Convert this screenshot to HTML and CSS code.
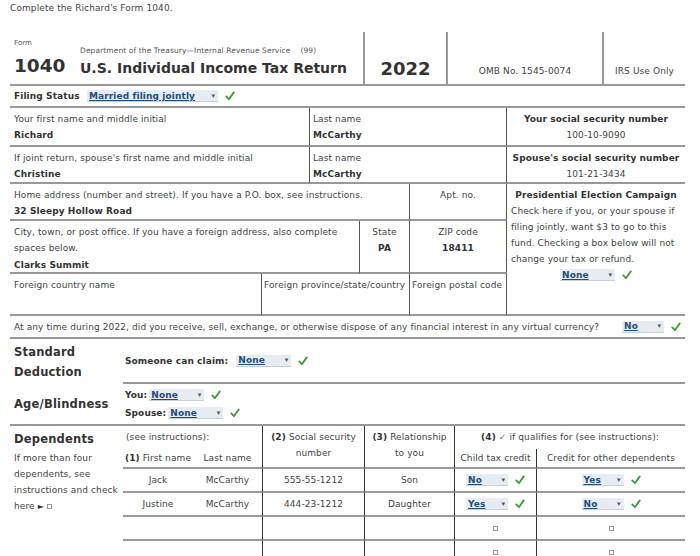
FILE: index.html
```html
<!DOCTYPE html>
<html>
<head>
<meta charset="utf-8">
<title>Form 1040</title>
<link rel="stylesheet" href="styles.css">
</head>
<body>
<div class="page">
  <p class="intro">Complete the Richard's Form 1040.</p>
  <div class="form">
    <header class="hdr">
      <div class="hdr-main">
        <div class="formno"><span class="form-word">Form</span><span class="num">1040</span></div>
        <div class="titleblock"><span class="dept">Department of the Treasury—Internal Revenue Service &nbsp;&nbsp;&nbsp;(99)</span><span class="title">U.S. Individual Income Tax Return</span></div>
      </div>
      <div class="hdr-year">2022</div>
      <div class="hdr-omb">OMB No. 1545-0074</div>
      <div class="hdr-irs">IRS Use Only</div>
    </header>

    <div class="filing">
      <span class="filing-label">Filing Status</span>
      <span class="sel sel-lg"><span class="sel-val">Married filing jointly</span><span class="sel-arrow">▾</span></span>
      <svg class="ok" viewBox="0 0 10 10"><path d="M1.3 5.4 L3.9 8.2 L8.8 1.4"/></svg>
    </div>

    <div class="ident">
      <div class="cell c-first"><div>Your first name and middle initial</div><div class="val">Richard</div></div>
      <div class="cell c-last"><div>Last name</div><div class="val">McCarthy</div></div>
      <div class="cell c-ssn last"><div class="val">Your social security number</div><div>100-10-9090</div></div>

      <div class="cell c-first"><div>If joint return, spouse's first name and middle initial</div><div class="val">Christine</div></div>
      <div class="cell c-last"><div>Last name</div><div class="val">McCarthy</div></div>
      <div class="cell c-ssn last"><div class="val">Spouse's social security number</div><div>101-21-3434</div></div>

      <div class="cell c-addr"><div class="nowrap">Home address (number and street). If you have a P.O. box, see instructions.</div><div class="val">32 Sleepy Hollow Road</div></div>
      <div class="cell c-apt center"><div>Apt. no.</div></div>
      <div class="cell c-pec last">
        <div class="val center">Presidential Election Campaign</div>
        <div class="pec-text">Check here if you, or your spouse if<br>filing jointly, want $3 to go to this<br>fund. Checking a box below will not<br>change your tax or refund.</div>
        <div class="sel-row">
          <span class="sel sel-md"><span class="sel-val">None</span><span class="sel-arrow">▾</span></span>
          <svg class="ok" viewBox="0 0 10 10"><path d="M1.3 5.4 L3.9 8.2 L8.8 1.4"/></svg>
        </div>
      </div>

      <div class="cell c-city"><div class="nowrap">City, town, or post office. If you have a foreign address, also complete<br>spaces below.</div><div class="val">Clarks Summit</div></div>
      <div class="cell c-state center"><div>State</div><div class="val">PA</div></div>
      <div class="cell c-zip center"><div>ZIP code</div><div class="val">18411</div></div>

      <div class="cell c-fcountry"><div>Foreign country name</div></div>
      <div class="cell c-fprov"><div class="nowrap">Foreign province/state/country</div></div>
      <div class="cell c-fpostal"><div class="nowrap">Foreign postal code</div></div>
    </div>

    <div class="currency">
      <span class="nowrap">At any time during 2022, did you receive, sell, exchange, or otherwise dispose of any financial interest in any virtual currency?</span>
      <span class="sel-row push">
        <span class="sel sel-sm"><span class="sel-val">No</span><span class="sel-arrow">▾</span></span>
        <svg class="ok" viewBox="0 0 10 10"><path d="M1.3 5.4 L3.9 8.2 L8.8 1.4"/></svg>
      </span>
    </div>

    <div class="deduction">
      <div class="ded-left std-left">Standard<br>Deduction</div>
      <div class="std-right">
        <span class="b">Someone can claim:</span>
        <span class="sel sel-md gap-l"><span class="sel-val">None</span><span class="sel-arrow">▾</span></span>
        <svg class="ok" viewBox="0 0 10 10"><path d="M1.3 5.4 L3.9 8.2 L8.8 1.4"/></svg>
      </div>
      <div class="ded-left age-left">Age/Blindness</div>
      <div class="age-right">
        <div class="age-line"><span class="b">You:</span><span class="sel sel-md"><span class="sel-val">None</span><span class="sel-arrow">▾</span></span><svg class="ok" viewBox="0 0 10 10"><path d="M1.3 5.4 L3.9 8.2 L8.8 1.4"/></svg></div>
        <div class="age-line"><span class="b">Spouse:</span><span class="sel sel-md"><span class="sel-val">None</span><span class="sel-arrow">▾</span></span><svg class="ok" viewBox="0 0 10 10"><path d="M1.3 5.4 L3.9 8.2 L8.8 1.4"/></svg></div>
      </div>
    </div>

    <div class="deps">
      <div class="deps-left">
        <div class="deps-title">Dependents</div>
        <div class="deps-note">If more than four<br>dependents, see<br>instructions and check<br>here <span class="tri">►</span> <span class="box"></span></div>
      </div>

      <div class="dh dh-see">(see instructions):</div>
      <div class="dh dh-ssn"><span class="b">(2)</span> Social security<br>number</div>
      <div class="dh dh-rel"><span class="b">(3)</span> Relationship<br>to you</div>
      <div class="dh dh-q"><span class="b">(4)</span> <span class="thin">✓</span> if qualifies for (see instructions):</div>
      <div class="dh2 dh-fn"><span><span class="b">(1)</span> First name</span></div>
      <div class="dh2 dh-ln vr">Last name</div>
      <div class="dh2 dh-ctc vr">Child tax credit</div>
      <div class="dh2 dh-cod">Credit for other dependents</div>

      <div class="dc">Jack</div>
      <div class="dc vr">McCarthy</div>
      <div class="dc vr">555-55-1212</div>
      <div class="dc vr">Son</div>
      <div class="dc vr"><span class="sel sel-sm"><span class="sel-val">No</span><span class="sel-arrow">▾</span></span><svg class="ok" viewBox="0 0 10 10"><path d="M1.3 5.4 L3.9 8.2 L8.8 1.4"/></svg></div>
      <div class="dc"><span class="sel sel-sm"><span class="sel-val">Yes</span><span class="sel-arrow">▾</span></span><svg class="ok" viewBox="0 0 10 10"><path d="M1.3 5.4 L3.9 8.2 L8.8 1.4"/></svg></div>

      <div class="dc">Justine</div>
      <div class="dc vr">McCarthy</div>
      <div class="dc vr">444-23-1212</div>
      <div class="dc vr">Daughter</div>
      <div class="dc vr"><span class="sel sel-sm"><span class="sel-val">Yes</span><span class="sel-arrow">▾</span></span><svg class="ok" viewBox="0 0 10 10"><path d="M1.3 5.4 L3.9 8.2 L8.8 1.4"/></svg></div>
      <div class="dc"><span class="sel sel-sm"><span class="sel-val">No</span><span class="sel-arrow">▾</span></span><svg class="ok" viewBox="0 0 10 10"><path d="M1.3 5.4 L3.9 8.2 L8.8 1.4"/></svg></div>

      <div class="dc"></div>
      <div class="dc vr"></div>
      <div class="dc vr"></div>
      <div class="dc vr"></div>
      <div class="dc vr"><span class="box"></span></div>
      <div class="dc"><span class="box"></span></div>

      <div class="dc"></div>
      <div class="dc vr"></div>
      <div class="dc vr"></div>
      <div class="dc vr"></div>
      <div class="dc vr"><span class="box"></span></div>
      <div class="dc"><span class="box"></span></div>
    </div>
  </div>
</div>
</body>
</html>
```

FILE: styles.css
```css
* { box-sizing: border-box; }

html, body { height: 100%; }

body {
  margin: 0;
  font-family: "DejaVu Sans", Verdana, sans-serif;
  font-size: 9px;
  letter-spacing: 0.1px;
  color: #444;
  background: #fff;
  overflow: hidden;
}

.page {
  width: 700px;
  padding: 2px 15px 0 10px;
}

.intro {
  margin: 0;
  height: 30px;
  line-height: 12px;
  color: #444;
}

.form { width: 675px; }

.nowrap { white-space: nowrap; }
.b { font-weight: bold; color: #333; }
.val { font-weight: bold; color: #333; }
.center { text-align: center; }

/* ---------- header ---------- */
.hdr {
  display: flex;
  height: 54px;
  border-bottom: 2px solid #999;
}

.hdr-main {
  width: 355px;
  display: flex;
  padding-left: 4px;
  border-right: 2px solid #999;
}

.formno {
  width: 66px;
  display: flex;
  flex-direction: column;
  padding-top: 7px;
}

.form-word {
  font-size: 7px;
  line-height: 9px;
  color: #555;
}

.num {
  margin-top: 7px;
  font-size: 18.5px;
  line-height: 22px;
  font-weight: bold;
  letter-spacing: 0;
  color: #333;
}

.titleblock {
  display: flex;
  flex-direction: column;
  padding-top: 14px;
}

.dept {
  font-size: 7.5px;
  line-height: 9px;
  color: #555;
  white-space: nowrap;
}

.title {
  margin-top: 3px;
  font-size: 14px;
  line-height: 20px;
  font-weight: bold;
  letter-spacing: 0;
  color: #333;
  white-space: nowrap;
}

.hdr-year {
  width: 83px;
  padding-top: 20px;
  border-right: 2px solid #999;
  display: flex;
  align-items: center;
  justify-content: center;
  font-size: 18px;
  font-weight: bold;
  letter-spacing: 0;
  color: #333;
}

.hdr-omb, .hdr-irs {
  display: flex;
  align-items: flex-end;
  justify-content: center;
  padding-bottom: 5px;
  line-height: 16px;
  white-space: nowrap;
}

.hdr-omb {
  width: 156px;
  border-right: 2px solid #999;
}

.hdr-irs { flex: 1; }

/* ---------- select + check ---------- */
.sel {
  display: inline-flex;
  align-items: center;
  justify-content: space-between;
  height: 12px;
  padding: 0 3px 0 2px;
  background: #e6ecf2;
  border-bottom: 1px solid #c5d0dc;
  color: #1f4d7a;
  font-weight: bold;
  line-height: 12px;
  flex: none;
}

.sel-val {
  text-decoration: underline;
  white-space: nowrap;
}

.sel-arrow {
  font-size: 7px;
  color: #555;
}

.sel-lg { width: 131px; }
.sel-md { width: 55px; }
.sel-sm { width: 42px; }

.ok {
  width: 10px;
  height: 10px;
  margin-left: 7px;
  fill: none;
  stroke: #3f9b36;
  stroke-width: 1.8;
  stroke-linecap: round;
  stroke-linejoin: round;
  flex: none;
}

.sel-row {
  display: flex;
  align-items: center;
  justify-content: center;
}

/* ---------- filing status ---------- */
.filing {
  height: 22px;
  display: flex;
  align-items: center;
  padding-left: 4px;
  border-bottom: 2px solid #999;
}

.filing-label {
  width: 73px;
  font-weight: bold;
  color: #333;
  white-space: nowrap;
}

/* ---------- identity grid ---------- */
.ident {
  display: grid;
  grid-template-columns: 252px 48px 50px 50px 97px 178px;
  grid-template-rows: 39px 37px 37px 53px 42px;
}

.cell {
  padding: 3px 4px 0;
  line-height: 16px;
  border-bottom: 2px solid #999;
  border-right: 1px solid #555;
  overflow: hidden;
}

.cell.last { border-right: 0; }

.c-first { grid-column: 1 / 3; }
.c-last { grid-column: 3 / 6; padding-left: 3px; }
.c-ssn { grid-column: 6; text-align: center; }
.c-addr { grid-column: 1 / 5; }
.c-apt { grid-column: 5; }
.c-pec { grid-column: 6; grid-row: 3 / 6; }
.c-city { grid-column: 1 / 4; }
.c-city .nowrap { margin-bottom: 1px; }
.c-state { grid-column: 4; }
.c-zip { grid-column: 5; }
.c-fcountry { grid-column: 1; }
.c-fprov { grid-column: 2 / 5; padding-left: 2px; }
.c-fpostal { grid-column: 5; padding-left: 2px; }

.pec-text { white-space: nowrap; }
.c-pec .sel-row { height: 16px; }

/* ---------- virtual currency ---------- */
.currency {
  height: 23px;
  display: flex;
  align-items: center;
  padding: 0 4px;
  border-bottom: 2px solid #999;
}

.push { margin-left: auto; }

/* ---------- deduction ---------- */
.deduction {
  display: grid;
  grid-template-columns: 113px 1fr;
  grid-template-rows: 45px 42px;
}

.ded-left {
  padding: 3px 4px 0;
  font-size: 11.5px;
  line-height: 20px;
  font-weight: bold;
  letter-spacing: 0.2px;
  color: #333;
  white-space: nowrap;
}

.std-right {
  display: flex;
  align-items: center;
  padding-left: 2px;
  border-bottom: 2px solid #999;
}

.gap-l { margin-left: 8px; }

.age-left {
  display: flex;
  align-items: center;
  padding-top: 0;
  border-bottom: 2px solid #999;
}

.age-right {
  display: flex;
  flex-direction: column;
  justify-content: center;
  padding-left: 2px;
  border-bottom: 2px solid #999;
}

.age-line {
  display: flex;
  align-items: center;
  height: 18px;
}

.age-line .sel { margin-left: 2px; }

/* ---------- dependents ---------- */
.deps {
  display: grid;
  grid-template-columns: 113px 70px 70px 102px 90px 82px 148px;
  grid-template-rows: 23px 20px 24px 24px 24px 24px;
}

.deps-left {
  grid-column: 1;
  grid-row: 1 / -1;
  padding: 4px 4px 0;
  white-space: nowrap;
}

.deps-title {
  font-size: 11.5px;
  line-height: 18px;
  font-weight: bold;
  letter-spacing: 0.2px;
  color: #333;
}

.deps-note {
  margin-top: 2px;
  line-height: 16px;
}

.tri {
  font-size: 8px;
  color: #333;
}

.box {
  display: inline-block;
  width: 5px;
  height: 5px;
  border: 1px solid #999;
  vertical-align: middle;
}

.dh {
  padding-top: 3px;
  line-height: 16px;
  white-space: nowrap;
}

.dh-see { grid-column: 2 / 4; grid-row: 1; padding-left: 3px; border-right: 1px solid #333; }
.dh-ssn { grid-column: 4; grid-row: 1 / 3; text-align: center; border-right: 1px solid #333; border-bottom: 2px solid #999; }
.dh-rel { grid-column: 5; grid-row: 1 / 3; text-align: center; border-right: 1px solid #333; border-bottom: 2px solid #999; }
.dh-q { grid-column: 6 / 8; grid-row: 1; text-align: center; }

.thin { font-weight: normal; color: #777; }

.dh2 {
  display: flex;
  align-items: center;
  justify-content: center;
  border-bottom: 2px solid #999;
  white-space: nowrap;
}

.dh-fn { grid-column: 2; }
.dh-ln { grid-column: 3; }
.dh-ctc { grid-column: 6; }
.dh-cod { grid-column: 7; }

.vr { border-right: 1px solid #333; }

.dc {
  display: flex;
  align-items: center;
  justify-content: center;
  border-bottom: 2px solid #999;
  white-space: nowrap;
}
```
